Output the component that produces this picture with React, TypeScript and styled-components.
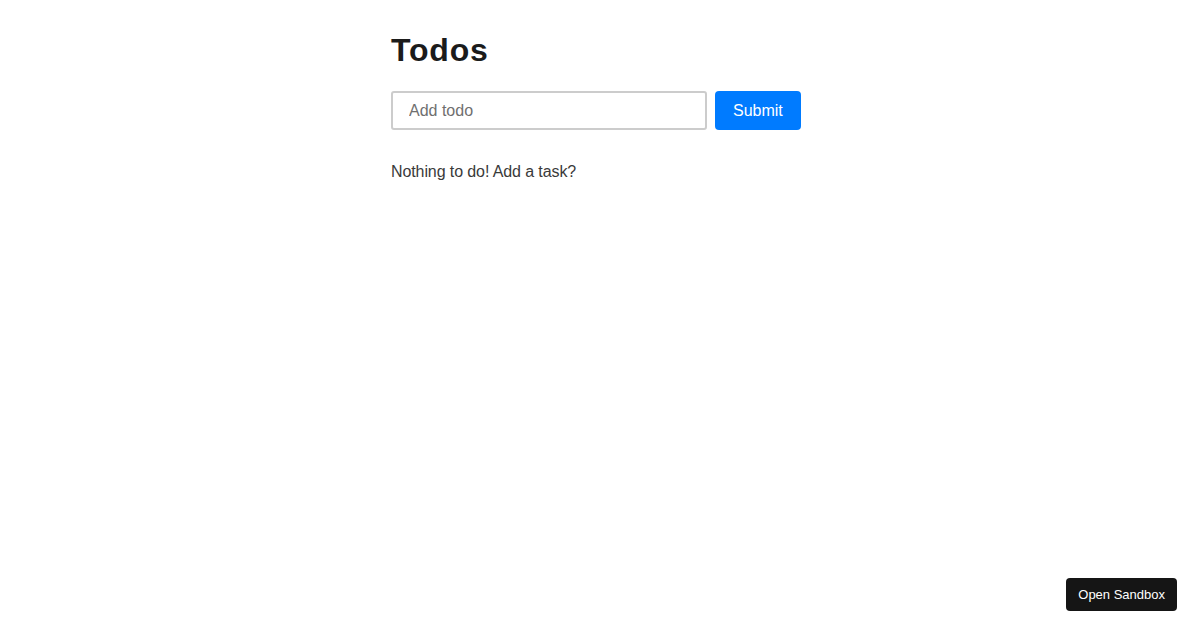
import React, { useState } from 'react';
import styled, { createGlobalStyle } from 'styled-components';

const GlobalStyle = createGlobalStyle`
  body {
    margin: 0;
    background: #fff;
    font-family: 'Liberation Sans', Arial, sans-serif;
  }
`;

const App: React.FC = () => {
  const [value, setValue] = useState('');
  const [todos, setTodos] = useState<string[]>([]);

  const handleSubmit = (e: React.FormEvent) => {
    e.preventDefault();
    if (!value.trim()) return;
    setTodos([...todos, value.trim()]);
    setValue('');
  };

  return (
    <>
      <GlobalStyle />
      <Container>
        <Title>Todos</Title>
        <Form onSubmit={handleSubmit}>
          <TodoInput
            placeholder="Add todo"
            value={value}
            onChange={(e) => setValue(e.target.value)}
          />
          <SubmitButton type="submit">Submit</SubmitButton>
        </Form>
        {todos.length === 0 ? (
          <EmptyText>Nothing to do! Add a task?</EmptyText>
        ) : (
          <TodoList>
            {todos.map((todo, i) => (
              <TodoItem key={i}>{todo}</TodoItem>
            ))}
          </TodoList>
        )}
      </Container>
      <SandboxButton>Open Sandbox</SandboxButton>
    </>
  );
};

const Container = styled.div`
  max-width: 418px;
  margin: 0 auto;
  padding-top: 32px;
`;

const Title = styled.h1`
  margin: 0 0 22px;
  font-size: 32px;
  letter-spacing: 0.8px;
  line-height: 37px;
  font-weight: 700;
  color: #1b1b1b;
`;

const Form = styled.form`
  display: flex;
  gap: 8px;
`;

const TodoInput = styled.input`
  box-sizing: border-box;
  width: 316px;
  height: 39px;
  padding: 0 16px;
  border: 2px solid #cccccc;
  border-radius: 3px;
  font-family: 'Liberation Sans', Arial, sans-serif;
  font-size: 16px;
  color: #333;
  outline: none;

  &::placeholder {
    color: #6f6f6f;
  }
`;

const SubmitButton = styled.button`
  height: 39px;
  padding: 0 18px;
  border: none;
  border-radius: 4px;
  background: #007bff;
  color: #fff;
  font-family: 'Liberation Sans', Arial, sans-serif;
  font-size: 16px;
  cursor: pointer;
`;

const EmptyText = styled.p`
  margin: 33px 0 0;
  font-size: 16px;
  line-height: 18px;
  letter-spacing: -0.1px;
  color: #3a3a3a;
`;

const TodoList = styled.ul`
  margin: 33px 0 0;
  padding: 0;
  list-style: none;
`;

const TodoItem = styled.li`
  font-size: 16px;
  color: #333;
  padding: 6px 0;
`;

const SandboxButton = styled.button`
  position: fixed;
  right: 23px;
  bottom: 19px;
  height: 33px;
  padding: 0 12px;
  border: none;
  border-radius: 4px;
  background: #151515;
  color: #fff;
  font-family: 'Liberation Sans', Arial, sans-serif;
  font-size: 13px;
  cursor: pointer;
`;

export default App;
